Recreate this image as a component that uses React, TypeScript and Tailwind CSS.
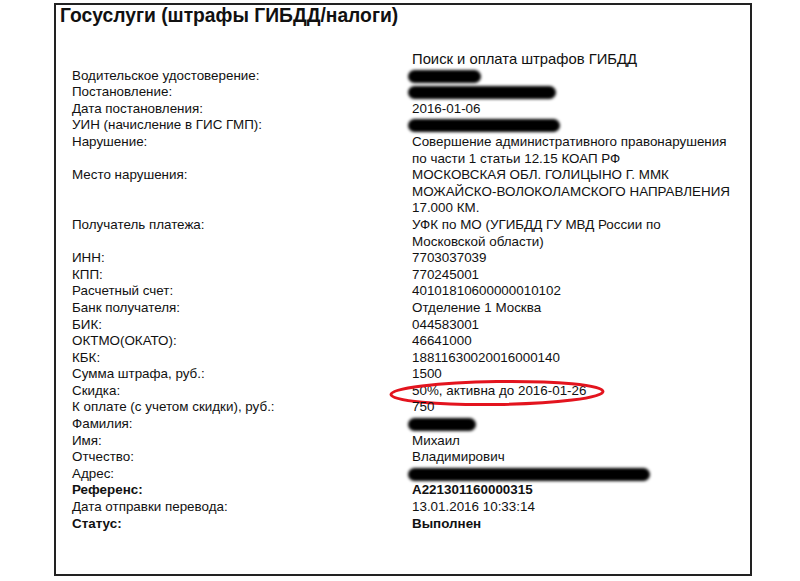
type Row = {
  label: string;
  value?: string[];
  hidden?: number;
  bold?: boolean;
  circled?: boolean;
};

const rows: Row[] = [
  { label: "Водительское удостоверение:", hidden: 73 },
  { label: "Постановление:", hidden: 148 },
  { label: "Дата постановления:", value: ["2016-01-06"] },
  { label: "УИН (начисление в ГИС ГМП):", hidden: 152 },
  {
    label: "Нарушение:",
    value: ["Совершение административного правонарушения", "по части 1 статьи 12.15 КОАП РФ"],
  },
  {
    label: "Место нарушения:",
    value: ["МОСКОВСКАЯ ОБЛ. ГОЛИЦЫНО Г. ММК", "МОЖАЙСКО-ВОЛОКОЛАМСКОГО НАПРАВЛЕНИЯ", "17.000 КМ."],
  },
  {
    label: "Получатель платежа:",
    value: ["УФК по МО (УГИБДД ГУ МВД России по", "Московской области)"],
  },
  { label: "ИНН:", value: ["7703037039"] },
  { label: "КПП:", value: ["770245001"] },
  { label: "Расчетный счет:", value: ["40101810600000010102"] },
  { label: "Банк получателя:", value: ["Отделение 1 Москва"] },
  { label: "БИК:", value: ["044583001"] },
  { label: "ОКТМО(ОКАТО):", value: ["46641000"] },
  { label: "КБК:", value: ["18811630020016000140"] },
  { label: "Сумма штрафа, руб.:", value: ["1500"] },
  { label: "Скидка:", value: ["50%, активна до 2016-01-26"], circled: true },
  { label: "К оплате (с учетом скидки), руб.:", value: ["750"] },
  { label: "Фамилия:", hidden: 68 },
  { label: "Имя:", value: ["Михаил"] },
  { label: "Отчество:", value: ["Владимирович"] },
  { label: "Адрес:", hidden: 242 },
  { label: "Референс:", value: ["A221301160000315"], bold: true },
  { label: "Дата отправки перевода:", value: ["13.01.2016 10:33:14"] },
  { label: "Статус:", value: ["Выполнен"], bold: true },
];

function Redacted({ width }: { width: number }) {
  return (
    <span className="relative block h-[16.6px]">
      <span
        className="absolute left-[-4px] top-[2px] h-[13px] rounded-full bg-black blur-[1.5px]"
        style={{ width }}
      />
    </span>
  );
}

export default function App() {
  return (
    <div
      className="min-h-[581px] bg-white pl-[54px] pt-[3px] text-[#111]"
      style={{ fontFamily: '"Liberation Sans", Arial, sans-serif' }}
    >
      <div className="h-[573px] w-[698px] border-2 border-[#222]">
        <h1 className="pl-[4px] pt-[1px] text-[19.3px] font-bold leading-[20px]">
          Госуслуги (штрафы ГИБДД/налоги)
        </h1>
        <div className="mt-[25px] grid grid-cols-[340px_1fr] pl-[16px] text-[13.4px] leading-[16.6px]">
          <div />
          <div className="text-[14.8px]">Поиск и оплата штрафов ГИБДД</div>
          {rows.map((r) => (
            <div key={r.label} className="contents">
              <div className={r.bold ? "font-bold" : ""}>{r.label}</div>
              <div className={r.bold ? "font-bold" : ""}>
                {r.hidden ? (
                  <Redacted width={r.hidden} />
                ) : (
                  <div className="relative">
                    {r.value!.map((line) => (
                      <div key={line}>{line}</div>
                    ))}
                    {r.circled && (
                      <svg
                        className="absolute left-[-24px] top-[-5px]"
                        width="220"
                        height="30"
                        viewBox="0 0 220 30"
                      >
                        <ellipse
                          cx="109"
                          cy="15"
                          rx="106"
                          ry="11.5"
                          fill="none"
                          stroke="#e3141e"
                          strokeWidth="3"
                          transform="rotate(-0.8 109 15)"
                        />
                      </svg>
                    )}
                  </div>
                )}
              </div>
            </div>
          ))}
        </div>
      </div>
    </div>
  );
}
